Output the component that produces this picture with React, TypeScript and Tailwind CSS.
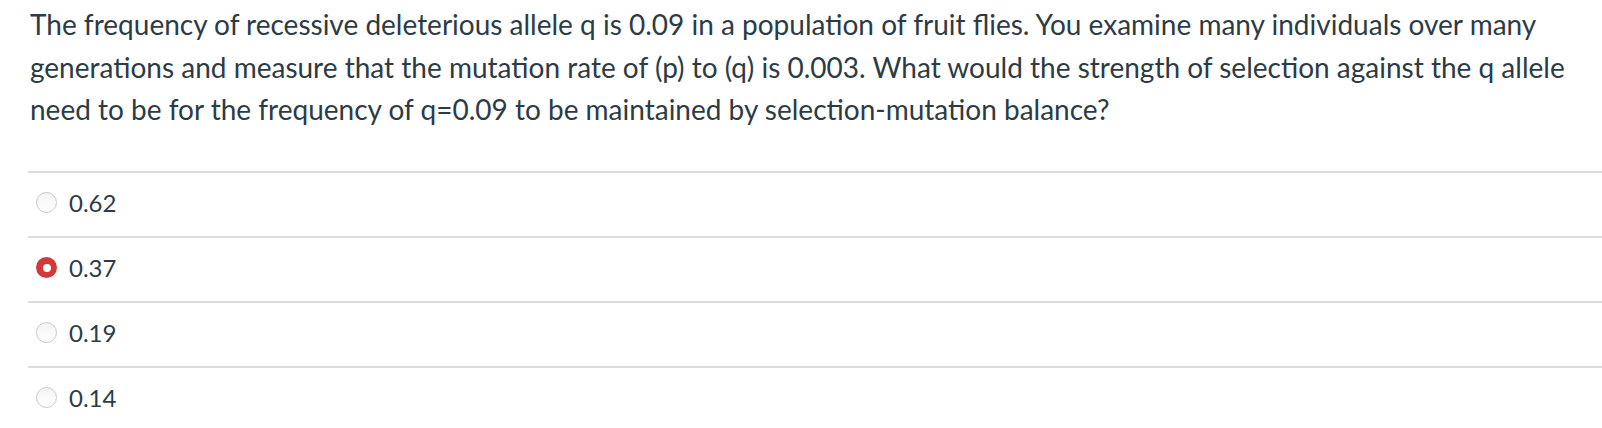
import React from "react";

// --- quiz question + answers ---
const answers = [
  { id: 1, label: "0.62", selected: false },
  { id: 2, label: "0.37", selected: true },
  { id: 3, label: "0.19", selected: false },
  { id: 4, label: "0.14", selected: false },
];

const Radio = ({ selected }: { selected: boolean }) =>
  selected ? (
    <span className="flex h-[21px] w-[21px] items-center justify-center rounded-full bg-[#d3393b]">
      <span className="h-[8px] w-[8px] rounded-full bg-white" />
    </span>
  ) : (
    <span className="h-[21px] w-[21px] rounded-full border border-[#c9c9c9] bg-gradient-to-b from-[#f4f4f4] to-white" />
  );

export default function App() {
  return (
    <div
      className="min-h-screen bg-white text-[#2d3b45]"
      style={{ fontFamily: "Lato, 'Open Sans', sans-serif" }}
    >
      {/* --- Question text --- */}
      <div className="pl-[30px] pr-4 pt-[3px] text-[28px] leading-[42.7px] whitespace-nowrap">
        <p>
          The frequency of recessive deleterious allele q is 0.09 in a population of fruit flies. You examine many individuals over many
          <br />
          generations and measure that the mutation rate of (p) to (q) is 0.003. What would the strength of selection against the q allele
          <br />
          need to be for the frequency of q=0.09 to be maintained by selection-mutation balance?
        </p>
      </div>

      {/* --- Answers --- */}
      <div className="ml-[28px] mt-[40px]">
        {answers.map((a) => (
          <div
            key={a.id}
            className="flex h-[65px] items-center gap-[12px] border-t-2 border-[#dcdcdc] pb-[4px] pl-[8px] text-[24px]"
          >
            <Radio selected={a.selected} />
            <span>{a.label}</span>
          </div>
        ))}
      </div>
    </div>
  );
}
